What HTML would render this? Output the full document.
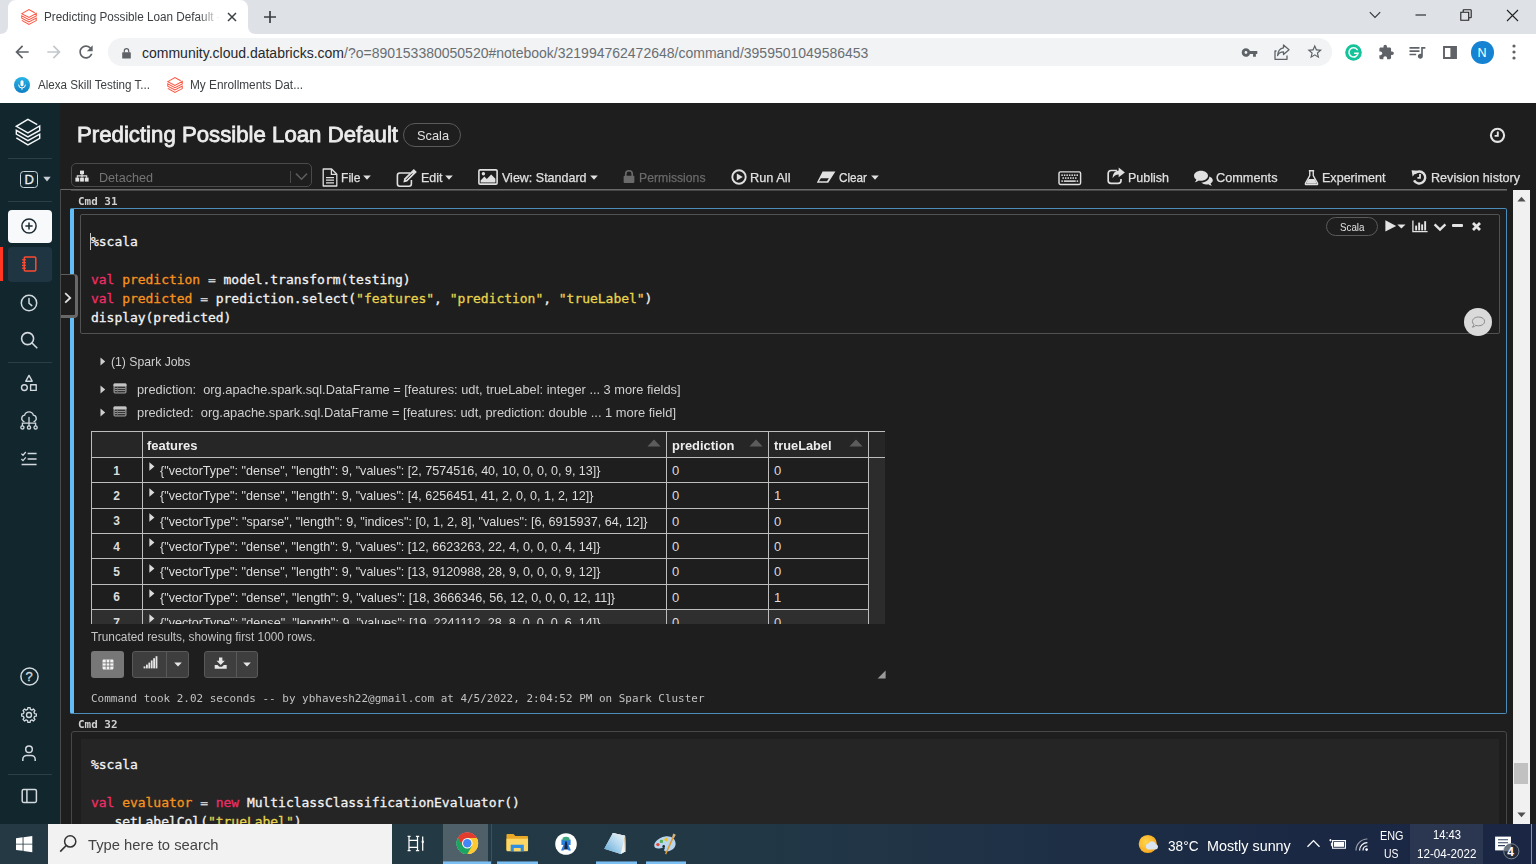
<!DOCTYPE html>
<html lang="en"><head><meta charset="utf-8"><title>Predicting Possible Loan Default - Databricks</title>
<style>
html,body{margin:0;padding:0;}
body{width:1536px;height:864px;overflow:hidden;position:relative;background:#1e1e1e;font-family:"Liberation Sans",sans-serif;}
body div,body svg,body span.t{position:absolute;}
svg{overflow:visible;}
span.t{white-space:pre;transform-origin:0 0;line-height:normal;}
</style></head><body>
<div style="left:60px;top:103px;width:1476px;height:721px;background:#1e1e1e;"></div>
<span class="t" style="left:76.8px;top:122.30px;font:400 22.3px 'Liberation Sans', sans-serif;color:#ececec;transform:scaleX(0.9961);-webkit-text-stroke:0.8px #ececec;">Predicting Possible Loan Default</span>
<div style="left:403px;top:122.5px;width:57.5px;height:24px;border:1px solid #5a5a5a;border-radius:12px;box-sizing:border-box;"></div>
<span class="t" style="left:416.5px;top:128.00px;font:400 13px 'Liberation Sans', sans-serif;color:#e0e0e0;transform:scaleX(0.9837);">Scala</span>
<svg style="left:1488px;top:126px;" width="19" height="19" viewBox="0 0 19 19"><g fill="none" stroke="#e4e4e4" stroke-width="2.1"><circle cx="9.5" cy="9.3" r="6.6"/><path d="M9.8 5.4 V9.9 H6.6" stroke-width="1.9"/></g></svg>
<div style="left:70.5px;top:163px;width:241.5px;height:24px;border:1px solid #4a4a4a;border-radius:5px;box-sizing:border-box;"></div>
<svg style="left:75px;top:169.5px;" width="14" height="13" viewBox="0 0 14 13"><g fill="#e2e2e2"><rect x="5" y="0.6" width="4" height="3.6"/><rect x="0.4" y="7.6" width="3.8" height="4"/><rect x="5.1" y="7.6" width="3.8" height="4"/><rect x="9.8" y="7.6" width="3.8" height="4"/></g><path d="M7 4 V7.6 M2.3 7.8 V5.9 H11.7 V7.8" stroke="#e2e2e2" stroke-width="1.1" fill="none"/></svg>
<span class="t" style="left:98.5px;top:170.20px;font:400 13.5px 'Liberation Sans', sans-serif;color:#757575;transform:scaleX(0.9343);">Detached</span>
<div style="left:290px;top:170.5px;width:1px;height:12px;background:#4a4a4a;"></div>
<svg style="left:295px;top:172px;" width="13" height="9" viewBox="0 0 13 9"><path d="M1 1.6 L6.5 7.2 L12 1.6" fill="none" stroke="#5c5c5c" stroke-width="1.5"/></svg>
<svg style="left:321px;top:168px;" width="18" height="19" viewBox="0 0 18 19"><g fill="none" stroke="#e0e0e0" stroke-width="1.3" stroke-linejoin="round"><path d="M2.2 1 H10.6 L15.8 6.2 V18 H2.2 Z"/><path d="M10.4 1.2 V6.4 H15.6"/><path d="M5 9.6 H13 M5 12.2 H13 M5 14.8 H13" stroke-width="1.2"/></g></svg>
<span class="t" style="left:340.5px;top:170.00px;font:400 13.5px 'Liberation Sans', sans-serif;color:#e0e0e0;transform:scaleX(0.8959);-webkit-text-stroke:0.25px;">File</span>
<svg style="left:363.4px;top:175px;" width="8" height="5" viewBox="0 0 8 5"><path d="M0.2 0.4 H7.8 L4 4.8 Z" fill="#e0e0e0"/></svg>
<svg style="left:396px;top:167.5px;" width="22" height="20" viewBox="0 0 22 20"><g fill="none" stroke="#e0e0e0" stroke-width="1.6" stroke-linejoin="round"><path d="M14.2 5 H3.8 Q1.4 5 1.4 7.4 V15.8 Q1.4 18.2 3.8 18.2 H13 Q15.4 18.2 15.4 15.8 V12"/></g><path d="M17.8 1 L20.8 4 L11.2 13.6 L7.4 14.4 L8.2 10.6 Z" fill="#e0e0e0"/><path d="M9.9 11.9 L16.4 5.4" stroke="#1e1e1e" stroke-width="1"/></svg>
<span class="t" style="left:420.5px;top:170.00px;font:400 13.5px 'Liberation Sans', sans-serif;color:#e0e0e0;transform:scaleX(0.9241);-webkit-text-stroke:0.25px;">Edit</span>
<svg style="left:445px;top:175px;" width="8" height="5" viewBox="0 0 8 5"><path d="M0.2 0.4 H7.8 L4 4.8 Z" fill="#e0e0e0"/></svg>
<svg style="left:478px;top:169px;" width="20" height="16" viewBox="0 0 20 16"><rect x="0.9" y="0.9" width="18.2" height="14.2" rx="1.2" fill="none" stroke="#e0e0e0" stroke-width="1.6"/><path d="M2.6 13.4 V11.4 L6.4 7.6 L8.8 10 L13.2 5.6 L17.4 9.8 V13.4 Z" fill="#e0e0e0"/><circle cx="5.4" cy="4.8" r="1.7" fill="#e0e0e0"/></svg>
<span class="t" style="left:502px;top:170.00px;font:400 13.5px 'Liberation Sans', sans-serif;color:#e0e0e0;transform:scaleX(0.9254);-webkit-text-stroke:0.25px;">View: Standard</span>
<svg style="left:590px;top:175px;" width="8" height="5" viewBox="0 0 8 5"><path d="M0.2 0.4 H7.8 L4 4.8 Z" fill="#e0e0e0"/></svg>
<svg style="left:623px;top:169.8px;" width="12" height="13.4" viewBox="0 0 12 14"><rect x="0.4" y="6" width="11.2" height="7.6" rx="1" fill="#6a6a6a"/><path d="M2.6 6.2 V4.2 A3.4 3.4 0 0 1 9.4 4.2 V6.2" fill="none" stroke="#6a6a6a" stroke-width="1.7"/></svg>
<span class="t" style="left:638.5px;top:170.00px;font:400 13.5px 'Liberation Sans', sans-serif;color:#6a6a6a;transform:scaleX(0.9044);-webkit-text-stroke:0.25px;">Permissions</span>
<svg style="left:730.5px;top:169px;" width="16" height="16" viewBox="0 0 16 16"><circle cx="8" cy="8" r="6.7" fill="none" stroke="#e0e0e0" stroke-width="1.9"/><path d="M5.8 4.4 L11.8 8 L5.8 11.6 Z" fill="#e0e0e0"/></svg>
<span class="t" style="left:750px;top:170.00px;font:400 13.5px 'Liberation Sans', sans-serif;color:#e0e0e0;transform:scaleX(0.9467);-webkit-text-stroke:0.25px;">Run All</span>
<svg style="left:815.8px;top:170.6px;" width="20" height="13" viewBox="0 0 20 13"><path d="M6.6 0.6 H19.4 L12.2 11.8 H0.8 Z M4.9 7.2 L3 10.2 H11 L12.9 7.2 Z" fill="#e0e0e0" fill-rule="evenodd"/></svg>
<span class="t" style="left:839px;top:170.00px;font:400 13.5px 'Liberation Sans', sans-serif;color:#e0e0e0;transform:scaleX(0.8678);-webkit-text-stroke:0.25px;">Clear</span>
<svg style="left:871px;top:175px;" width="8" height="5" viewBox="0 0 8 5"><path d="M0.2 0.4 H7.8 L4 4.8 Z" fill="#e0e0e0"/></svg>
<svg style="left:1058px;top:170.6px;" width="23.6" height="14.4" viewBox="0 0 26 16"><rect x="1" y="1" width="24" height="14" rx="1.6" fill="none" stroke="#e0e0e0" stroke-width="1.6"/><g fill="#e0e0e0"><rect x="3.6" y="3.8" width="1.7" height="1.7"/><rect x="6.4" y="3.8" width="1.7" height="1.7"/><rect x="9.2" y="3.8" width="1.7" height="1.7"/><rect x="12.0" y="3.8" width="1.7" height="1.7"/><rect x="14.8" y="3.8" width="1.7" height="1.7"/><rect x="17.6" y="3.8" width="1.7" height="1.7"/><rect x="20.4" y="3.8" width="1.7" height="1.7"/><rect x="4.8" y="7" width="1.7" height="1.7"/><rect x="7.6" y="7" width="1.7" height="1.7"/><rect x="10.4" y="7" width="1.7" height="1.7"/><rect x="13.2" y="7" width="1.7" height="1.7"/><rect x="16.0" y="7" width="1.7" height="1.7"/><rect x="18.8" y="7" width="1.7" height="1.7"/><rect x="3.6" y="10.4" width="1.7" height="1.7"/><rect x="6.4" y="10.4" width="13.2" height="1.7"/><rect x="20.6" y="10.4" width="1.7" height="1.7"/></g></svg>
<svg style="left:1106.5px;top:166.8px;" width="18.5" height="17.5" viewBox="0 0 19 18"><path d="M10.2 3.6 H4.2 Q1.2 3.6 1.2 6.6 V13.8 Q1.2 16.8 4.2 16.8 H11.4 Q14.4 16.8 14.4 13.8 V12.4" fill="none" stroke="#e0e0e0" stroke-width="1.7"/><path d="M12 0.6 L18.4 5.6 L12 10.6 V7.6 C9 7.6 7 8.8 5.8 11.6 C5.8 7 8 4 12 3.6 Z" fill="#e0e0e0"/></svg>
<span class="t" style="left:1127.5px;top:169.80px;font:400 13.5px 'Liberation Sans', sans-serif;color:#e0e0e0;transform:scaleX(0.9259);-webkit-text-stroke:0.25px;">Publish</span>
<svg style="left:1194px;top:169.6px;" width="19" height="16" viewBox="0 0 19 16"><path d="M7 0.8 C10.9 0.8 14 3 14 5.8 C14 8.6 10.9 10.8 7 10.8 C6.2 10.8 5.5 10.7 4.8 10.6 C3.8 11.5 2.4 12 0.8 12.2 C1.6 11.4 2.1 10.6 2.3 9.6 C0.9 8.7 0 7.3 0 5.8 C0 3 3.1 0.8 7 0.8 Z" fill="#e0e0e0"/><path d="M15.4 6.4 C17.4 7.2 18.8 8.6 18.8 10.2 C18.8 11.5 17.9 12.6 16.6 13.4 C16.8 14.2 17.3 15 18.1 15.6 C16.6 15.5 15.2 15 14.3 14.2 C13.7 14.3 13 14.4 12.4 14.4 C10.3 14.4 8.5 13.7 7.3 12.5 C11.6 12.4 15.2 10 15.4 6.4 Z" fill="#e0e0e0"/></svg>
<span class="t" style="left:1216px;top:169.80px;font:400 13.5px 'Liberation Sans', sans-serif;color:#e0e0e0;transform:scaleX(0.9423);-webkit-text-stroke:0.25px;">Comments</span>
<svg style="left:1304px;top:169.8px;" width="15" height="15.6" viewBox="0 0 15 17"><path d="M4.6 0.8 H10.4 M5.6 1 V6.2 L0.9 14.6 Q0.4 16 2 16 H13 Q14.6 16 14.1 14.6 L9.4 6.2 V1" fill="none" stroke="#e0e0e0" stroke-width="1.5"/><path d="M4.2 9.8 H10.8 L13.4 15 H1.6 Z" fill="#e0e0e0"/></svg>
<span class="t" style="left:1322px;top:169.80px;font:400 13.5px 'Liberation Sans', sans-serif;color:#e0e0e0;transform:scaleX(0.9300);-webkit-text-stroke:0.25px;">Experiment</span>
<svg style="left:1410.5px;top:169px;" width="17" height="16" viewBox="0 0 17 16"><path d="M3.6 4.6 A6 6 0 1 1 3 11.4" fill="none" stroke="#e0e0e0" stroke-width="2.4"/><path d="M0.6 1.2 L6.6 1.8 L1.6 7.4 Z" fill="#e0e0e0"/><path d="M9 5 V8.9 H6.4" fill="none" stroke="#e0e0e0" stroke-width="1.8"/></svg>
<span class="t" style="left:1431px;top:169.80px;font:400 13.5px 'Liberation Sans', sans-serif;color:#e0e0e0;transform:scaleX(0.9339);-webkit-text-stroke:0.25px;">Revision history</span>
<div style="left:60px;top:189px;width:1px;height:635px;background:#4a4a4a;"></div>
<div style="left:61px;top:189px;width:1446px;height:1px;background:#696969;"></div>
<div style="left:71px;top:190px;width:1436px;height:1px;background:#474747;"></div>
<div style="left:1513px;top:189.5px;width:17px;height:634.5px;background:#f1f1f1;"></div>
<svg style="left:1517px;top:196px;" width="9" height="6" viewBox="0 0 9 6"><path d="M0.4 5.4 L4.5 0.8 L8.6 5.4 Z" fill="#505050"/></svg>
<svg style="left:1517px;top:812px;" width="9" height="6" viewBox="0 0 9 6"><path d="M0.4 0.6 L4.5 5.2 L8.6 0.6 Z" fill="#505050"/></svg>
<div style="left:1514px;top:763px;width:14px;height:21px;background:#c1c1c1;"></div>
<div style="left:70px;top:208px;width:1437px;height:506px;border:1px solid #4a8dbb;border-left:4px solid #62bdf7;border-radius:2px;box-sizing:border-box;"></div>
<span class="t" style="left:78px;top:194.60px;font:700 11px 'DejaVu Sans Mono', 'Liberation Mono', monospace;color:#d0d0d0;transform:scaleX(0.9937);">Cmd 31</span>
<div style="left:80px;top:214px;width:1420px;height:120px;border:1px solid #515151;border-radius:2px;box-sizing:border-box;"></div>
<div style="left:90.3px;top:233px;width:1px;height:16.5px;background:#c8c8c8;"></div>
<span class="t" style="left:91px;top:234.30px;font:400 13px 'DejaVu Sans Mono', 'Liberation Mono', monospace;color:#f2f2f2;letter-spacing:-0.03px;-webkit-text-stroke:0.3px;">%scala</span>
<span class="t" style="left:91px;top:272.30px;font:400 13px 'DejaVu Sans Mono', 'Liberation Mono', monospace;color:#f2f2f2;letter-spacing:-0.03px;-webkit-text-stroke:0.3px;"><span style="color:#ee2d66">val</span> <span style="color:#f7931e">prediction</span> <span style="color:#cfcfcf">=</span> model.transform(testing)</span>
<span class="t" style="left:91px;top:291.30px;font:400 13px 'DejaVu Sans Mono', 'Liberation Mono', monospace;color:#f2f2f2;letter-spacing:-0.03px;-webkit-text-stroke:0.3px;"><span style="color:#ee2d66">val</span> <span style="color:#f7931e">predicted</span> <span style="color:#cfcfcf">=</span> prediction.select(<span style="color:#e8d44d">"features"</span>, <span style="color:#e8d44d">"prediction"</span>, <span style="color:#e8d44d">"trueLabel"</span>)</span>
<span class="t" style="left:91px;top:310.30px;font:400 13px 'DejaVu Sans Mono', 'Liberation Mono', monospace;color:#f2f2f2;letter-spacing:-0.03px;-webkit-text-stroke:0.3px;">display(predicted)</span>
<div style="left:61px;top:274px;width:17px;height:44px;background:#1e1e1e;border-top:1px solid #5e5e5e;border-right:3px solid #686868;border-bottom:3px solid #686868;border-radius:0 4px 4px 0;box-sizing:border-box;"></div>
<svg style="left:64px;top:291.5px;" width="8" height="12" viewBox="0 0 8 12"><path d="M1.2 1.2 L6.2 5.9 L1.2 10.6" fill="none" stroke="#e2e2e2" stroke-width="1.8"/></svg>
<div style="left:1326px;top:217px;width:51.5px;height:19px;border:1px solid #5a5a5a;border-radius:10px;box-sizing:border-box;"></div>
<span class="t" style="left:1339.5px;top:221.00px;font:400 11.5px 'Liberation Sans', sans-serif;color:#e0e0e0;transform:scaleX(0.8512);">Scala</span>
<svg style="left:1385px;top:220px;" width="12" height="12" viewBox="0 0 12 12"><path d="M0.4 0.2 L11.2 5.9 L0.4 11.6 Z" fill="#e4e4e4"/></svg>
<svg style="left:1397px;top:224px;" width="9" height="5" viewBox="0 0 9 5"><path d="M0.3 0.5 H8.5 L4.4 4.6 Z" fill="#e4e4e4"/></svg>
<svg style="left:1412px;top:219.5px;" width="16" height="13" viewBox="0 0 16 13"><path d="M0.9 0.4 V11.6 H15.6" fill="none" stroke="#e4e4e4" stroke-width="1.3"/><g fill="#e4e4e4"><rect x="3.2" y="5.6" width="1.9" height="4.8"/><rect x="6.2" y="2.6" width="1.9" height="7.8"/><rect x="9.2" y="4.4" width="1.9" height="6"/><rect x="12.2" y="1.2" width="1.9" height="9.2"/></g></svg>
<svg style="left:1432.5px;top:222px;" width="14" height="10" viewBox="0 0 14 10"><path d="M1.6 2.4 L7 7.6 L12.4 2.4" fill="none" stroke="#e4e4e4" stroke-width="2.4"/></svg>
<div style="left:1452px;top:224.2px;width:11.4px;height:3.2px;background:#e4e4e4;border-radius:1px;"></div>
<svg style="left:1471px;top:221px;" width="11" height="11" viewBox="0 0 11 11"><path d="M2 2 L9 9 M9 2 L2 9" stroke="#e4e4e4" stroke-width="2.8" fill="none"/></svg>
<div style="left:1464px;top:307.8px;width:28px;height:28px;background:#dadada;border-radius:50%;"></div>
<svg style="left:1470.5px;top:315.5px;" width="15" height="13" viewBox="0 0 15 13"><path d="M7.6 1 C11 1 13.6 2.9 13.6 5.4 C13.6 7.9 11 9.8 7.6 9.8 C6.6 9.8 5.7 9.6 4.9 9.4 C4 10.4 2.8 10.9 1.4 11.2 C2.2 10.3 2.7 9.4 2.8 8.4 C1.9 7.6 1.4 6.5 1.4 5.4 C1.4 2.9 4.2 1 7.6 1 Z" fill="none" stroke="#8a8a8a" stroke-width="1"/></svg>
<svg style="left:99.5px;top:356.5px;" width="6" height="9" viewBox="0 0 6 9"><path d="M0.5 0.4 L5.2 4.5 L0.5 8.6 Z" fill="#cfcfcf"/></svg>
<span class="t" style="left:111px;top:354.30px;font:400 13px 'Liberation Sans', sans-serif;color:#cfcfcf;transform:scaleX(0.9403);">(1) Spark Jobs</span>
<svg style="left:100px;top:385px;" width="6" height="9" viewBox="0 0 6 9"><path d="M0.5 0.4 L5.2 4.5 L0.5 8.6 Z" fill="#cfcfcf"/></svg>
<svg style="left:113px;top:382.9px;" width="14" height="11" viewBox="0 0 14 11"><rect x="0.5" y="0.5" width="13" height="10" rx="1.4" fill="#9a9a9a"/><rect x="0.5" y="0.5" width="13" height="3" rx="1.2" fill="#c4c4c4"/><rect x="1.7" y="3.6" width="10.6" height="5.8" fill="#333"/><path d="M1.7 5.5 H12.3 M1.7 7.5 H12.3" stroke="#9a9a9a" stroke-width="0.9"/><path d="M4.4 3.6 V9.4" stroke="#777" stroke-width="0.8"/></svg>
<span class="t" style="left:136.5px;top:382.10px;font:400 13px 'Liberation Sans', sans-serif;color:#cfcfcf;transform:scaleX(0.9851);white-space:pre;">prediction:  org.apache.spark.sql.DataFrame = [features: udt, trueLabel: integer ... 3 more fields]</span>
<svg style="left:100px;top:407.5px;" width="6" height="9" viewBox="0 0 6 9"><path d="M0.5 0.4 L5.2 4.5 L0.5 8.6 Z" fill="#cfcfcf"/></svg>
<svg style="left:113px;top:406.09999999999997px;" width="14" height="11" viewBox="0 0 14 11"><rect x="0.5" y="0.5" width="13" height="10" rx="1.4" fill="#9a9a9a"/><rect x="0.5" y="0.5" width="13" height="3" rx="1.2" fill="#c4c4c4"/><rect x="1.7" y="3.6" width="10.6" height="5.8" fill="#333"/><path d="M1.7 5.5 H12.3 M1.7 7.5 H12.3" stroke="#9a9a9a" stroke-width="0.9"/><path d="M4.4 3.6 V9.4" stroke="#777" stroke-width="0.8"/></svg>
<span class="t" style="left:136.5px;top:404.60px;font:400 13px 'Liberation Sans', sans-serif;color:#cfcfcf;transform:scaleX(0.9912);white-space:pre;">predicted:  org.apache.spark.sql.DataFrame = [features: udt, prediction: double ... 1 more field]</span>
<div style="left:91.5px;top:431px;width:793px;height:26px;background:#262626;"></div>
<div style="left:869px;top:458px;width:15.5px;height:166px;background:#2c2c2c;"></div>
<div style="left:91.5px;top:609.16px;width:777px;height:14.840000000000003px;background:#2f2f2f;"></div>
<div style="left:91px;top:431px;width:793.5px;height:1px;background:#bdbdbd;"></div>
<div style="left:91px;top:457px;width:793.5px;height:1px;background:#bdbdbd;"></div>
<div style="left:91px;top:482.36px;width:778px;height:1px;background:#bdbdbd;"></div>
<div style="left:91px;top:507.72px;width:778px;height:1px;background:#bdbdbd;"></div>
<div style="left:91px;top:533.08px;width:778px;height:1px;background:#bdbdbd;"></div>
<div style="left:91px;top:558.44px;width:778px;height:1px;background:#bdbdbd;"></div>
<div style="left:91px;top:583.8px;width:778px;height:1px;background:#bdbdbd;"></div>
<div style="left:91px;top:609.16px;width:778px;height:1px;background:#bdbdbd;"></div>
<div style="left:91px;top:431px;width:1px;height:193px;background:#bdbdbd;"></div>
<div style="left:141.5px;top:431px;width:1px;height:193px;background:#bdbdbd;"></div>
<div style="left:665.5px;top:431px;width:1px;height:193px;background:#bdbdbd;"></div>
<div style="left:768px;top:431px;width:1px;height:193px;background:#bdbdbd;"></div>
<div style="left:868px;top:431px;width:1px;height:193px;background:#bdbdbd;"></div>
<span class="t" style="left:147px;top:437.60px;font:700 13px 'Liberation Sans', sans-serif;color:#ededed;transform:scaleX(0.9985);">features</span>
<span class="t" style="left:671.5px;top:437.60px;font:700 13px 'Liberation Sans', sans-serif;color:#ededed;transform:scaleX(0.9945);">prediction</span>
<span class="t" style="left:773.5px;top:437.60px;font:700 13px 'Liberation Sans', sans-serif;color:#ededed;transform:scaleX(0.9826);">trueLabel</span>
<svg style="left:646.5px;top:439px;" width="14" height="8" viewBox="0 0 14 8"><path d="M0.4 7.6 L7 0.6 L13.6 7.6 Z" fill="#5c5c5c"/></svg>
<svg style="left:748.5px;top:439px;" width="14" height="8" viewBox="0 0 14 8"><path d="M0.4 7.6 L7 0.6 L13.6 7.6 Z" fill="#5c5c5c"/></svg>
<svg style="left:848.5px;top:439px;" width="14" height="8" viewBox="0 0 14 8"><path d="M0.4 7.6 L7 0.6 L13.6 7.6 Z" fill="#5c5c5c"/></svg>
<div style="left:91.5px;top:431px;width:793px;height:193px;overflow:hidden;"><div style="left:-91.5px;top:-431px;">
<span class="t" style="left:113.2px;top:463.50px;font:700 12px 'Liberation Sans', sans-serif;color:#dcdcdc;">1</span>
<svg style="left:148.5px;top:462.29999999999995px;" width="6" height="9" viewBox="0 0 6 9"><path d="M0.4 0.3 L5.4 4.5 L0.4 8.7 Z" fill="#dcdcdc"/></svg>
<span class="t" style="left:160px;top:462.90px;font:400 13px 'Liberation Sans', sans-serif;color:#dcdcdc;transform:scaleX(0.9658);">{"vectorType": "dense", "length": 9, "values": [2, 7574516, 40, 10, 0, 0, 0, 9, 13]}</span>
<span class="t" style="left:672px;top:462.90px;font:400 13px 'Liberation Sans', sans-serif;color:#dcdcdc;">0</span>
<span class="t" style="left:774px;top:462.90px;font:400 13px 'Liberation Sans', sans-serif;color:#dcdcdc;">0</span>
<span class="t" style="left:113.2px;top:488.86px;font:700 12px 'Liberation Sans', sans-serif;color:#dcdcdc;">2</span>
<svg style="left:148.5px;top:487.65999999999997px;" width="6" height="9" viewBox="0 0 6 9"><path d="M0.4 0.3 L5.4 4.5 L0.4 8.7 Z" fill="#dcdcdc"/></svg>
<span class="t" style="left:160px;top:488.26px;font:400 13px 'Liberation Sans', sans-serif;color:#dcdcdc;transform:scaleX(0.9657);">{"vectorType": "dense", "length": 9, "values": [4, 6256451, 41, 2, 0, 0, 1, 2, 12]}</span>
<span class="t" style="left:672px;top:488.26px;font:400 13px 'Liberation Sans', sans-serif;color:#dcdcdc;">0</span>
<span class="t" style="left:774px;top:488.26px;font:400 13px 'Liberation Sans', sans-serif;color:#dcdcdc;">1</span>
<span class="t" style="left:113.2px;top:514.22px;font:700 12px 'Liberation Sans', sans-serif;color:#dcdcdc;">3</span>
<svg style="left:148.5px;top:513.02px;" width="6" height="9" viewBox="0 0 6 9"><path d="M0.4 0.3 L5.4 4.5 L0.4 8.7 Z" fill="#dcdcdc"/></svg>
<span class="t" style="left:160px;top:513.62px;font:400 13px 'Liberation Sans', sans-serif;color:#dcdcdc;transform:scaleX(0.9708);">{"vectorType": "sparse", "length": 9, "indices": [0, 1, 2, 8], "values": [6, 6915937, 64, 12]}</span>
<span class="t" style="left:672px;top:513.62px;font:400 13px 'Liberation Sans', sans-serif;color:#dcdcdc;">0</span>
<span class="t" style="left:774px;top:513.62px;font:400 13px 'Liberation Sans', sans-serif;color:#dcdcdc;">0</span>
<span class="t" style="left:113.2px;top:539.58px;font:700 12px 'Liberation Sans', sans-serif;color:#dcdcdc;">4</span>
<svg style="left:148.5px;top:538.38px;" width="6" height="9" viewBox="0 0 6 9"><path d="M0.4 0.3 L5.4 4.5 L0.4 8.7 Z" fill="#dcdcdc"/></svg>
<span class="t" style="left:160px;top:538.98px;font:400 13px 'Liberation Sans', sans-serif;color:#dcdcdc;transform:scaleX(0.9658);">{"vectorType": "dense", "length": 9, "values": [12, 6623263, 22, 4, 0, 0, 0, 4, 14]}</span>
<span class="t" style="left:672px;top:538.98px;font:400 13px 'Liberation Sans', sans-serif;color:#dcdcdc;">0</span>
<span class="t" style="left:774px;top:538.98px;font:400 13px 'Liberation Sans', sans-serif;color:#dcdcdc;">0</span>
<span class="t" style="left:113.2px;top:564.94px;font:700 12px 'Liberation Sans', sans-serif;color:#dcdcdc;">5</span>
<svg style="left:148.5px;top:563.7399999999999px;" width="6" height="9" viewBox="0 0 6 9"><path d="M0.4 0.3 L5.4 4.5 L0.4 8.7 Z" fill="#dcdcdc"/></svg>
<span class="t" style="left:160px;top:564.34px;font:400 13px 'Liberation Sans', sans-serif;color:#dcdcdc;transform:scaleX(0.9658);">{"vectorType": "dense", "length": 9, "values": [13, 9120988, 28, 9, 0, 0, 0, 9, 12]}</span>
<span class="t" style="left:672px;top:564.34px;font:400 13px 'Liberation Sans', sans-serif;color:#dcdcdc;">0</span>
<span class="t" style="left:774px;top:564.34px;font:400 13px 'Liberation Sans', sans-serif;color:#dcdcdc;">0</span>
<span class="t" style="left:113.2px;top:590.30px;font:700 12px 'Liberation Sans', sans-serif;color:#dcdcdc;">6</span>
<svg style="left:148.5px;top:589.0999999999999px;" width="6" height="9" viewBox="0 0 6 9"><path d="M0.4 0.3 L5.4 4.5 L0.4 8.7 Z" fill="#dcdcdc"/></svg>
<span class="t" style="left:160px;top:589.70px;font:400 13px 'Liberation Sans', sans-serif;color:#dcdcdc;transform:scaleX(0.9689);">{"vectorType": "dense", "length": 9, "values": [18, 3666346, 56, 12, 0, 0, 0, 12, 11]}</span>
<span class="t" style="left:672px;top:589.70px;font:400 13px 'Liberation Sans', sans-serif;color:#dcdcdc;">0</span>
<span class="t" style="left:774px;top:589.70px;font:400 13px 'Liberation Sans', sans-serif;color:#dcdcdc;">1</span>
<span class="t" style="left:113.2px;top:615.66px;font:700 12px 'Liberation Sans', sans-serif;color:#dcdcdc;">7</span>
<svg style="left:148.5px;top:614.4599999999999px;" width="6" height="9" viewBox="0 0 6 9"><path d="M0.4 0.3 L5.4 4.5 L0.4 8.7 Z" fill="#dcdcdc"/></svg>
<span class="t" style="left:160px;top:615.06px;font:400 13px 'Liberation Sans', sans-serif;color:#dcdcdc;transform:scaleX(0.9699);">{"vectorType": "dense", "length": 9, "values": [19, 2241112, 28, 8, 0, 0, 0, 6, 14]}</span>
<span class="t" style="left:672px;top:615.06px;font:400 13px 'Liberation Sans', sans-serif;color:#dcdcdc;">0</span>
<span class="t" style="left:774px;top:615.06px;font:400 13px 'Liberation Sans', sans-serif;color:#dcdcdc;">0</span>
</div></div>
<span class="t" style="left:91px;top:630.00px;font:400 12px 'Liberation Sans', sans-serif;color:#c4c4c4;transform:scaleX(0.9861);">Truncated results, showing first 1000 rows.</span>
<div style="left:91px;top:651px;width:33px;height:26.5px;background:#777;border-radius:3px;"></div>
<svg style="left:101.5px;top:658.5px;" width="12" height="11" viewBox="0 0 12 11"><rect x="0.6" y="0.6" width="10.8" height="9.8" rx="0.8" fill="#f4f4f4"/><path d="M0.6 3.9 H11.4 M0.6 7.1 H11.4 M4.2 0.6 V10.4 M7.8 0.6 V10.4" stroke="#777" stroke-width="0.9"/></svg>
<div style="left:132px;top:651px;width:57px;height:26.5px;background:#3e3e3e;border:1px solid #595959;border-radius:3px;box-sizing:border-box;"></div>
<div style="left:166px;top:651.5px;width:1px;height:25.5px;background:#595959;"></div>
<svg style="left:143px;top:656px;" width="15" height="13" viewBox="0 0 15 13"><g fill="#e6e6e6"><rect x="0.6" y="10.4" width="1.8" height="2"/><rect x="3" y="8.6" width="1.8" height="3.8"/><rect x="5.4" y="6.6" width="1.8" height="5.8"/><rect x="7.8" y="4.4" width="1.8" height="8"/><rect x="10.2" y="2.2" width="1.8" height="10.2"/><rect x="12.6" y="0.2" width="1.8" height="12.2"/></g></svg>
<svg style="left:173.5px;top:662px;" width="8" height="5" viewBox="0 0 8 5"><path d="M0.2 0.4 H7.8 L4 4.6 Z" fill="#e6e6e6"/></svg>
<div style="left:204px;top:651px;width:54px;height:26.5px;background:#3e3e3e;border:1px solid #595959;border-radius:3px;box-sizing:border-box;"></div>
<div style="left:235.5px;top:651.5px;width:1px;height:25.5px;background:#595959;"></div>
<svg style="left:213.5px;top:657.4px;" width="13.4" height="12.2" viewBox="0 0 14 13"><g fill="#e6e6e6"><path d="M5.2 0.4 H8.8 V4 H11.4 L7 8.4 L2.6 4 H5.2 Z"/><path d="M0.6 8.6 H3.6 L5.6 10.4 H8.4 L10.4 8.6 H13.4 V12.4 H0.6 Z"/></g></svg>
<svg style="left:242.5px;top:662px;" width="8" height="5" viewBox="0 0 8 5"><path d="M0.2 0.4 H7.8 L4 4.6 Z" fill="#e6e6e6"/></svg>
<svg style="left:877px;top:670px;" width="9" height="9" viewBox="0 0 9 9"><path d="M8.6 0.6 V8.6 H0.6 Z" fill="#9a9a9a"/></svg>
<span class="t" style="left:91px;top:691.60px;font:400 11px 'DejaVu Sans Mono', 'Liberation Mono', monospace;color:#c2c2c2;transform:scaleX(0.9961);">Command took 2.02 seconds -- by ybhavesh22@gmail.com at 4/5/2022, 2:04:52 PM on Spark Cluster</span>
<span class="t" style="left:78px;top:718.20px;font:700 11px 'DejaVu Sans Mono', 'Liberation Mono', monospace;color:#d0d0d0;transform:scaleX(0.9937);">Cmd 32</span>
<div style="left:70.5px;top:731px;width:1436.5px;height:100px;border:1px solid #474747;border-radius:3px;box-sizing:border-box;"></div>
<div style="left:81px;top:739px;width:1418px;height:90px;background:#252525;"></div>
<span class="t" style="left:91px;top:757.30px;font:400 13px 'DejaVu Sans Mono', 'Liberation Mono', monospace;color:#f2f2f2;letter-spacing:-0.03px;-webkit-text-stroke:0.3px;">%scala</span>
<span class="t" style="left:91px;top:795.30px;font:400 13px 'DejaVu Sans Mono', 'Liberation Mono', monospace;color:#f2f2f2;letter-spacing:-0.03px;-webkit-text-stroke:0.3px;"><span style="color:#ee2d66">val</span> <span style="color:#f7931e">evaluator</span> <span style="color:#cfcfcf">=</span> <span style="color:#ee2d66">new</span> MulticlassClassificationEvaluator()</span>
<span class="t" style="left:91px;top:814.30px;font:400 13px 'DejaVu Sans Mono', 'Liberation Mono', monospace;color:#f2f2f2;letter-spacing:-0.03px;-webkit-text-stroke:0.3px;">  .setLabelCol(<span style="color:#e8d44d">"trueLabel"</span>)</span>
<div style="left:0px;top:103px;width:60px;height:721px;background:#12262e;"></div>
<svg style="left:8px;top:112px;" width="40" height="40" viewBox="0 0 40 40"><path d="M29.2 12.7 L19.9 7.4 L8.33 14.35 L19.9 20.8 L31.7 13.9 V18.5 L19.9 24.8 L8.33 18.3 V22.2 L19.9 28.7 L31.7 22.2 V26.4 L19.9 32.9 L8.33 25.9" fill="none" stroke="#f4f6f7" stroke-width="1.45" stroke-linejoin="miter"/></svg>
<div style="left:8px;top:158px;width:44px;height:1px;background:#2b3f49;"></div>
<div style="left:20.2px;top:170.8px;width:17.8px;height:16.8px;border:1.5px solid #ccd4d9;border-radius:3.5px;box-sizing:border-box;"></div>
<span class="t" style="left:24.4px;top:172.20px;font:400 13px 'Liberation Sans', sans-serif;color:#eef2f4;-webkit-text-stroke:0.3px;">D</span>
<svg style="left:43px;top:176px;" width="8" height="6" viewBox="0 0 8 6"><path d="M0.3 0.8 H7.7 L4 5.4 Z" fill="#c5ced3"/></svg>
<div style="left:8px;top:200.5px;width:44px;height:1px;background:#2b3f49;"></div>
<div style="left:8px;top:209.5px;width:44px;height:33.5px;background:#f7f9fa;border-radius:4px;"></div>
<svg style="left:20px;top:217px;" width="18" height="18" viewBox="0 0 18 18"><circle cx="9" cy="9" r="7.1" fill="none" stroke="#1b2b33" stroke-width="1.5"/><path d="M9 5.4 V12.6 M5.4 9 H12.6" stroke="#1b2b33" stroke-width="1.5"/></svg>
<div style="left:8px;top:247px;width:44px;height:34.5px;background:#1f3642;border-radius:4px;"></div>
<div style="left:0px;top:247px;width:3px;height:33.5px;background:#ff3621;"></div>
<svg style="left:20px;top:255px;" width="18" height="18" viewBox="0 0 18 18"><g fill="none" stroke="#ff4a31" stroke-width="1.5"><rect x="4.2" y="2" width="11.6" height="14" rx="1.2"/><path d="M2 4.8 H6 M2 7.6 H6 M2 10.4 H6 M2 13.2 H6" stroke-width="1.2"/></g></svg>
<svg style="left:19px;top:293px;" width="20" height="20" viewBox="0 0 20 20"><g fill="none" stroke="#d3dade" stroke-width="1.5" stroke-linecap="round"><circle cx="10" cy="10" r="7.7"/><path d="M10 5.4 V10.2 L12.8 12.6"/></g></svg>
<svg style="left:19px;top:330px;" width="20" height="20" viewBox="0 0 20 20"><g fill="none" stroke="#d3dade" stroke-width="1.6" stroke-linecap="round"><circle cx="8.6" cy="8.6" r="6"/><path d="M13 13 L17.8 17.8"/></g></svg>
<div style="left:8px;top:361.5px;width:44px;height:1px;background:#2b3f49;"></div>
<svg style="left:19px;top:373px;" width="20" height="20" viewBox="0 0 20 20"><g fill="none" stroke="#d3dade" stroke-width="1.4" stroke-linejoin="round"><path d="M10 2.4 L13.2 8.2 H6.8 Z"/><circle cx="5.4" cy="14.6" r="2.9"/><rect x="11.6" y="11.8" width="5.6" height="5.6"/></g></svg>
<svg style="left:19px;top:411px;" width="20" height="20" viewBox="0 0 20 20"><g fill="none" stroke="#d3dade" stroke-width="1.3" stroke-linecap="round"><path d="M5 10.6 A3.3 3.3 0 0 1 5.6 4.2 A4.6 4.6 0 0 1 14.4 4.2 A3.3 3.3 0 0 1 15 10.6"/><path d="M10 6.4 V14.6 M3.4 14.6 V12.2 H16.6 V14.6"/><circle cx="3.4" cy="16.4" r="1.6"/><circle cx="10" cy="16.4" r="1.6"/><circle cx="16.6" cy="16.4" r="1.6"/></g></svg>
<svg style="left:19px;top:449px;" width="20" height="20" viewBox="0 0 20 20"><g fill="none" stroke="#d3dade" stroke-width="1.5"><path d="M8.6 4.6 H17.6 M8.6 10 H17.6 M2.6 15.4 H17.6"/><path d="M2.4 4.6 L4 6.2 L6.8 3 M2.4 10 L4 11.6 L6.8 8.4" stroke-width="1.3"/></g></svg>
<svg style="left:18.5px;top:666px;" width="21" height="21" viewBox="0 0 21 21"><circle cx="10.5" cy="10.5" r="8.6" fill="none" stroke="#d3dade" stroke-width="1.5"/></svg>
<span class="t" style="left:25.4px;top:669.40px;font:400 13px 'Liberation Sans', sans-serif;color:#d3dade;-webkit-text-stroke:0.3px #d3dade;">?</span>
<svg style="left:19px;top:705px;" width="20" height="20" viewBox="0 0 20 20"><path d="M8.59 4.48 L8.89 2.68 L11.11 2.68 L11.41 4.48 L12.91 5.10 L14.39 4.04 L15.96 5.61 L14.90 7.09 L15.52 8.59 L17.32 8.89 L17.32 11.11 L15.52 11.41 L14.90 12.91 L15.96 14.39 L14.39 15.96 L12.91 14.90 L11.41 15.52 L11.11 17.32 L8.89 17.32 L8.59 15.52 L7.09 14.90 L5.61 15.96 L4.04 14.39 L5.10 12.91 L4.48 11.41 L2.68 11.11 L2.68 8.89 L4.48 8.59 L5.10 7.09 L4.04 5.61 L5.61 4.04 L7.09 5.10 Z" fill="none" stroke="#d3dade" stroke-width="1.35" stroke-linejoin="round"/><circle cx="10" cy="10" r="2.5" fill="none" stroke="#d3dade" stroke-width="1.35"/></svg>
<svg style="left:19px;top:743px;" width="20" height="20" viewBox="0 0 20 20"><g fill="none" stroke="#d3dade" stroke-width="1.5"><circle cx="10" cy="6.2" r="3.3"/><path d="M3.8 18 V16.4 A4 4 0 0 1 7.8 12.4 H12.2 A4 4 0 0 1 16.2 16.4 V18"/></g></svg>
<div style="left:8px;top:773.5px;width:44px;height:1px;background:#2b3f49;"></div>
<svg style="left:19px;top:786px;" width="20" height="20" viewBox="0 0 20 20"><g fill="none" stroke="#d3dade" stroke-width="1.5"><rect x="3.2" y="3.6" width="14.2" height="12.8" rx="1.4"/><path d="M7.9 3.6 V16.4"/></g></svg>
<div style="left:0px;top:0px;width:1536px;height:34px;background:#dee1e6;"></div>
<svg style="left:0px;top:0px;" width="260" height="34" viewBox="0 0 260 34"><path d="M0 34 C5 34 8 31 8 26 V8 C8 3.5 11.5 0 16 0 H240 C244.5 0 248 3.5 248 8 V26 C248 31 251 34 256 34 Z" fill="#fff"/></svg>
<svg style="left:20.5px;top:8.8px;" width="16" height="16" viewBox="0 0 16 16"><g transform="translate(-4.40 -3.59) scale(0.62 0.575)"><path d="M29.2 12.7 L19.9 7.4 L8.33 14.35 L19.9 20.8 L31.7 13.9 V18.5 L19.9 24.8 L8.33 18.3 V22.2 L19.9 28.7 L31.7 22.2 V26.4 L19.9 32.9 L8.33 25.9" fill="none" stroke="#ff5540" stroke-width="1.67"/></g></svg>
<span class="t" style="left:44px;top:10.00px;font:400 12px 'Liberation Sans', sans-serif;color:#3c4043;transform:scaleX(0.9773);width:190px;overflow:hidden;-webkit-mask-image:linear-gradient(90deg,#000 158px,transparent 180px);">Predicting Possible Loan Default - Databricks Community Edition</span>
<svg style="left:226px;top:11px;" width="12" height="12" viewBox="0 0 12 12"><path d="M2 2 L10 10 M10 2 L2 10" stroke="#3c4043" stroke-width="1.5" fill="none"/></svg>
<svg style="left:263px;top:10px;" width="14" height="14" viewBox="0 0 14 14"><path d="M7 1 V13 M1 7 H13" stroke="#3c4043" stroke-width="1.7" fill="none"/></svg>
<svg style="left:1369px;top:10px;" width="12" height="10" viewBox="0 0 12 10"><path d="M0.8 2.2 L6 7.4 L11.2 2.2" stroke="#333" stroke-width="1.1" fill="none"/></svg>
<svg style="left:1415px;top:10px;" width="12" height="10" viewBox="0 0 12 10"><path d="M0.5 5 H11" stroke="#222" stroke-width="1.1" fill="none"/></svg>
<svg style="left:1460px;top:9px;" width="12" height="12" viewBox="0 0 12 12"><path d="M0.8 3.3 H8.7 V11.2 H0.8 Z M3.2 3.3 V1.2 C3.2 0.9 3.4 0.8 3.6 0.8 H10.6 C11 0.8 11.2 1 11.2 1.4 V8.3 C11.2 8.6 11 8.8 10.7 8.8 H8.7" stroke="#222" stroke-width="1.1" fill="none"/></svg>
<svg style="left:1506px;top:9px;" width="13" height="13" viewBox="0 0 13 13"><path d="M1 1 L12 12 M12 1 L1 12" stroke="#222" stroke-width="1.1" fill="none"/></svg>
<div style="left:0px;top:34px;width:1536px;height:69px;background:#fff;"></div>
<svg style="left:12px;top:42px;" width="20" height="20" viewBox="0 0 24 24"><path fill="#5f6368" d="M20 11H7.83l5.59-5.59L12 4l-8 8 8 8 1.41-1.41L7.83 13H20v-2z"/></svg>
<svg style="left:44px;top:42px;" width="20" height="20" viewBox="0 0 24 24"><path fill="#c4c7cb" d="M12 4l-1.41 1.41L16.17 11H4v2h12.17l-5.58 5.59L12 20l8-8z"/></svg>
<svg style="left:76px;top:42px;" width="20" height="20" viewBox="0 0 24 24"><path fill="#5f6368" d="M17.65 6.35C16.2 4.9 14.21 4 12 4c-4.42 0-7.99 3.58-7.99 8s3.57 8 7.99 8c3.73 0 6.84-2.55 7.73-6h-2.08c-.82 2.33-3.04 4-5.65 4-3.31 0-6-2.69-6-6s2.69-6 6-6c1.66 0 3.14.69 4.22 1.78L13 11h7V4l-2.35 2.35z"/></svg>
<div style="left:108px;top:38px;width:1224px;height:28px;background:#f1f3f4;border-radius:14px;"></div>
<svg style="left:121.5px;top:48px;" width="9" height="11" viewBox="0 0 9 11"><path d="M0.8 4.2 H8.2 Q8.8 4.2 8.8 4.8 V10 Q8.8 10.6 8.2 10.6 H0.8 Q0.2 10.6 0.2 10 V4.8 Q0.2 4.2 0.8 4.2 Z" fill="#5f6368"/><path d="M2.3 4.4 V2.9 A2.2 2.2 0 0 1 6.7 2.9 V4.4" fill="none" stroke="#5f6368" stroke-width="1.2"/></svg>
<span class="t" style="left:142px;top:44.90px;font:400 14px 'Liberation Sans', sans-serif;color:#696e73;"><span style="color:#26282c">community.cloud.databricks.com</span>/?o=890153380050520#notebook/321994762472648/command/3959501049586453</span>
<svg style="left:1241px;top:44px;" width="17" height="17" viewBox="0 0 24 24"><path fill="#5f6368" d="M12.65 10C11.83 7.67 9.61 6 7 6c-3.31 0-6 2.69-6 6s2.69 6 6 6c2.61 0 4.83-1.67 5.65-4H17v4h4v-4h2v-4H12.65zM7 14c-1.1 0-2-.9-2-2s.9-2 2-2 2 .9 2 2-.9 2-2 2z"/></svg>
<svg style="left:1273px;top:43px;" width="18" height="18" viewBox="0 0 18 18"><g fill="none" stroke="#5f6368" stroke-width="1.3" stroke-linejoin="round"><path d="M3.5 8 H2 V16.3 H14 V12.5"/><path d="M10.5 2 L16 6.8 L10.5 11.6 V8.9 C7.5 8.9 5.8 10 4.6 12.6 C4.9 8.6 6.8 5.2 10.5 4.8 Z"/></g></svg>
<svg style="left:1305.5px;top:43.3px;" width="17.5" height="17.5" viewBox="0 0 24 24"><path fill="#5f6368" d="M22 9.24l-7.19-.62L12 2 9.19 8.63 2 9.24l5.46 4.73L5.82 21 12 17.27 18.18 21l-1.63-7.03L22 9.24zM12 15.4l-3.76 2.27 1-4.28-3.32-2.88 4.38-.38L12 6.1l1.71 4.04 4.38.38-3.32 2.88 1 4.28L12 15.4z"/></svg>
<svg style="left:1345px;top:44px;" width="17" height="17" viewBox="0 0 17 17"><circle cx="8.5" cy="8.5" r="8.3" fill="#15c39a"/><path d="M12.2 5.6 A4.6 4.6 0 1 0 13.1 9.2 H9.6" fill="none" stroke="#fff" stroke-width="1.5" stroke-linecap="round"/></svg>
<svg style="left:1377.5px;top:44px;" width="16.5" height="16.5" viewBox="0 0 24 24"><path fill="#5f6368" d="M20.5 11H19V7c0-1.1-.9-2-2-2h-4V3.5C13 2.12 11.88 1 10.5 1S8 2.12 8 3.5V5H4c-1.1 0-1.99.9-1.99 2v3.8H3.5c1.49 0 2.7 1.21 2.7 2.7s-1.21 2.7-2.7 2.7H2V20c0 1.1.9 2 2 2h3.8v-1.5c0-1.49 1.21-2.7 2.7-2.7 1.49 0 2.7 1.21 2.7 2.7V22H17c1.1 0 2-.9 2-2v-4h1.5c1.38 0 2.5-1.12 2.5-2.5S21.88 11 20.5 11z"/></svg>
<svg style="left:1407px;top:42px;" width="20" height="20" viewBox="0 0 24 24"><path fill="#5f6368" d="M15 6H3v2h12V6zm0 4H3v2h12v-2zM3 16h8v-2H3v2zM17 6v8.18c-.31-.11-.65-.18-1-.18-1.66 0-3 1.34-3 3s1.34 3 3 3 3-1.34 3-3V8h3V6h-5z"/></svg>
<svg style="left:1443px;top:45.5px;" width="14" height="13" viewBox="0 0 14 13"><path d="M1 1 H13 V12 H1 Z" fill="none" stroke="#5f6368" stroke-width="1.9"/><path d="M7.4 1 H13 V12 H7.4 Z" fill="#5f6368"/></svg>
<div style="left:1471px;top:41px;width:22.6px;height:22.6px;background:#1583d2;border-radius:50%;"></div>
<span class="t" style="left:1477.6px;top:45.50px;font:400 12.5px 'Liberation Sans', sans-serif;color:#fff;">N</span>
<svg style="left:1512px;top:43px;" width="4" height="18" viewBox="0 0 4 18"><circle cx="2" cy="3" r="1.6" fill="#5f6368"/><circle cx="2" cy="9" r="1.6" fill="#5f6368"/><circle cx="2" cy="15" r="1.6" fill="#5f6368"/></svg>
<svg style="left:14px;top:77px;" width="16" height="16" viewBox="0 0 16 16"><defs><linearGradient id="alx" x1="0" y1="0" x2="0" y2="1"><stop offset="0" stop-color="#2ab3e6"/><stop offset="1" stop-color="#0f7fc4"/></linearGradient></defs><circle cx="8" cy="8" r="8" fill="url(#alx)"/><rect x="6.5" y="3.2" width="3" height="6" rx="1.5" fill="#fff"/><path d="M4.6 7.6 A3.4 3.4 0 0 0 11.4 7.6 M8 11 V12.8" stroke="#fff" stroke-width="1" fill="none"/></svg>
<span class="t" style="left:38px;top:78.00px;font:400 12px 'Liberation Sans', sans-serif;color:#3c4043;transform:scaleX(0.9686);">Alexa Skill Testing T...</span>
<svg style="left:166.5px;top:77px;" width="16" height="16" viewBox="0 0 16 16"><g transform="translate(-4.40 -3.59) scale(0.62 0.575)"><path d="M29.2 12.7 L19.9 7.4 L8.33 14.35 L19.9 20.8 L31.7 13.9 V18.5 L19.9 24.8 L8.33 18.3 V22.2 L19.9 28.7 L31.7 22.2 V26.4 L19.9 32.9 L8.33 25.9" fill="none" stroke="#ff5540" stroke-width="1.67"/></g></svg>
<span class="t" style="left:190px;top:78.00px;font:400 12px 'Liberation Sans', sans-serif;color:#3c4043;transform:scaleX(0.9852);">My Enrollments Dat...</span>
<div style="left:0px;top:824px;width:1536px;height:40px;background:linear-gradient(90deg,#243944 0px,#233944 400px,#223845 700px,#203446 900px,#1d2e45 1100px,#1b2844 1300px,#1a2643 1536px);"></div>
<svg style="left:16px;top:836px;" width="16.3" height="16.3" viewBox="0 0 17 17"><path fill="#fff" d="M0 2.4 L6.9 1.4 V8 H0 Z M7.8 1.3 L17 0 V8 H7.8 Z M0 8.9 H6.9 V15.5 L0 14.6 Z M7.8 8.9 H17 V17 L7.8 15.7 Z"/></svg>
<div style="left:48px;top:824px;width:344px;height:40px;background:#f2f2f2;"></div>
<svg style="left:59px;top:834px;" width="19" height="19" viewBox="0 0 19 19"><circle cx="11.2" cy="7.4" r="5.6" fill="none" stroke="#333" stroke-width="1.5"/><path d="M7.2 11.5 L1.2 17.6" stroke="#333" stroke-width="1.6" fill="none"/></svg>
<span class="t" style="left:88px;top:835.50px;font:400 15px 'Liberation Sans', sans-serif;color:#444;transform:scaleX(0.9843);">Type here to search</span>
<svg style="left:406px;top:834px;" width="20" height="20" viewBox="0 0 20 20"><g fill="none" stroke="#fff" stroke-width="1.25"><path d="M3 2.4 V16.7 M11.5 2.4 V16.7 M3 6.3 H11.5 M3 13.4 H11.5 M1.6 2.4 H4.6 M9.9 2.4 H13.2 M1.6 16.7 H4.6 M9.9 16.7 H13.2 M16.7 2.4 V16.7"/></g><rect x="15.7" y="6.7" width="2.1" height="2.2" fill="#fff"/></svg>
<div style="left:443px;top:824px;width:45px;height:40px;background:rgba(255,255,255,0.2);"></div>
<div style="left:491px;top:824px;width:1px;height:40px;background:rgba(255,255,255,0.12);"></div>
<div style="left:443px;top:862px;width:48px;height:2px;background:#7cc0f3;"></div>
<div style="left:443px;top:861px;width:48px;height:1px;background:rgba(124,192,243,0.55);"></div>
<svg style="left:455.8px;top:832.2px;" width="22.6" height="22.6" viewBox="0 0 24 24"><circle cx="12" cy="12" r="11.5" fill="#fff"/><path d="M12 12 L2.04 6.25 A11.5 11.5 0 0 1 21.96 6.25 Z" fill="#e33b2e"/><path d="M12 12 L21.96 6.25 A11.5 11.5 0 0 1 12 23.5 Z" fill="#fcc934"/><path d="M12 12 L12 23.5 A11.5 11.5 0 0 1 2.04 6.25 Z" fill="#1da462"/><path d="M12 6.3 H21.9 A11.5 11.5 0 0 0 2.04 6.25 L7 14.8 Z" fill="#e33b2e"/><path d="M16.95 14.85 L12 23.5 A11.5 11.5 0 0 0 21.93 6.3 H12 Z" fill="#fcc934"/><path d="M7.05 14.85 L2.04 6.25 A11.5 11.5 0 0 0 12 23.5 L16.95 14.85 Z" fill="#1da462"/><circle cx="12" cy="12" r="5.6" fill="#fff"/><circle cx="12" cy="12" r="4.5" fill="#4285f4"/></svg>
<div style="left:497px;top:862px;width:40.5px;height:2px;background:#7cc0f3;"></div>
<div style="left:497px;top:861px;width:40.5px;height:1px;background:rgba(124,192,243,0.55);"></div>
<svg style="left:505.5px;top:833.4px;" width="22.5" height="19.7" viewBox="0 0 24 21"><path d="M0.5 2 Q0.5 1 1.5 1 H8 L10 3.2 H22.5 Q23.5 3.2 23.5 4.2 V18 H0.5 Z" fill="#e9a825"/><path d="M0.5 6 H23.5 V18.5 Q23.5 19.5 22.5 19.5 H1.5 Q0.5 19.5 0.5 18.5 Z" fill="#fdd765"/><path d="M5 12.5 H19 V19.5 H5 Z" fill="#2f8ee0"/><path d="M8.3 16 H15.7 V19.5 H8.3 Z" fill="#fdd765"/></svg>
<svg style="left:555.2px;top:832.6px;" width="22" height="22" viewBox="0 0 22 22"><circle cx="11" cy="11" r="10.8" fill="#fff"/><path d="M6.4 6.6 H15.6 V12 H13.6 L16 17.6 H13.4 L11 11.6 L8.6 17.6 H6 L8.4 12 H6.4 Z" fill="#2b7de0"/><path d="M7.6 4.8 Q11 2.6 14.4 4.8 V7.4 H7.6 Z" fill="#3ea67c"/><path d="M10.2 8.4 H11.8 L13 16.6 H9 Z" fill="#15294a"/></svg>
<div style="left:596px;top:862px;width:40.5px;height:2px;background:#7cc0f3;"></div>
<div style="left:596px;top:861px;width:40.5px;height:1px;background:rgba(124,192,243,0.55);"></div>
<svg style="left:603px;top:832px;" width="24" height="23" viewBox="0 0 24 23"><defs><linearGradient id="npg" x1="0" y1="1" x2="1" y2="0"><stop offset="0" stop-color="#5aa5d6"/><stop offset="0.55" stop-color="#b5d8ee"/><stop offset="1" stop-color="#f2f7fb"/></linearGradient></defs><path d="M9.9 1 L22.1 3.8 L22.8 19.2 L17.8 22.1 L1.3 16.7 Z" fill="#e8eef3"/><path d="M9.9 1 L22.1 3.8 L17.8 22.1 L1.3 16.7 Z" fill="url(#npg)"/><path d="M22.1 3.8 L22.8 19.2 L17.8 22.1 Z" fill="#f1f1ee"/><path d="M22.1 3.8 L22.9 19.2 L22 19.7 L21.6 6 Z" fill="#c08a3c"/><path d="M9.9 1 L22.1 3.8 L21.8 5 L9.4 2.2 Z" fill="#dfe6ec"/></svg>
<div style="left:645.5px;top:862px;width:40.5px;height:2px;background:#7cc0f3;"></div>
<div style="left:645.5px;top:861px;width:40.5px;height:1px;background:rgba(124,192,243,0.55);"></div>
<svg style="left:653px;top:831px;" width="25" height="25" viewBox="0 0 25 25"><path d="M12 5.6 C17.6 4.4 23 8 22.6 13.2 C22.2 17.8 17.4 20.6 12.6 20.4 C11 20.4 10.8 18.8 11.6 17.8 C12.2 16.8 11.2 16 10 16.4 C7.4 17.4 2.6 18.6 1.4 15.6 C0.2 11.6 5.4 6.8 12 5.6 Z" fill="#b9d6ee"/><circle cx="4.9" cy="13.6" r="1.7" fill="#e5463a"/><rect x="6.9" y="8.9" width="3" height="3" fill="#55b05a"/><circle cx="13.2" cy="8.6" r="1.8" fill="#f4c21f"/><circle cx="10.7" cy="15.4" r="1.3" fill="#1c2b36"/><path d="M19.2 6.6 L20.6 7.2 L13.2 23.4 L12 22.8 Z" fill="#e39a2b"/><path d="M20.2 2.6 L22.8 3.8 L20.8 7.4 L19 6.6 Z" fill="#d8b27a"/></svg>
<svg style="left:1137px;top:833px;" width="24" height="23" viewBox="0 0 24 23"><defs><radialGradient id="sun" cx="0.4" cy="0.4" r="0.7"><stop offset="0" stop-color="#ffd54a"/><stop offset="1" stop-color="#f7a21b"/></radialGradient></defs><circle cx="10.8" cy="11" r="9.1" fill="url(#sun)"/><path d="M10.8 16.6 A3.1 3.1 0 0 1 11.4 10.6 A4 4 0 0 1 18.8 11 A2.9 2.9 0 0 1 19 16.6 Z" fill="#d9e6f2"/></svg>
<span class="t" style="left:1168px;top:836.80px;font:400 15px 'Liberation Sans', sans-serif;color:#fff;transform:scaleX(0.9100);">38°C</span>
<span class="t" style="left:1206.5px;top:836.80px;font:400 15px 'Liberation Sans', sans-serif;color:#fff;transform:scaleX(0.9572);">Mostly sunny</span>
<svg style="left:1306px;top:838px;" width="15" height="11" viewBox="0 0 15 11"><path d="M1.5 8.8 L7.5 2.6 L13.5 8.8" fill="none" stroke="#fff" stroke-width="1.3"/></svg>
<svg style="left:1329px;top:838px;" width="18" height="12" viewBox="0 0 18 12"><path d="M3.6 2.6 H16.4 V10.2 H3.6 Z" fill="none" stroke="#fff" stroke-width="1.1"/><rect x="5" y="4" width="10" height="4.8" fill="#fff"/><path d="M3.6 5 H2.4 V7.8 H3.6 M1.4 1 V3.4 M0.4 2.2 H2.6" stroke="#fff" stroke-width="1" fill="none"/></svg>
<svg style="left:1354px;top:837px;" width="16" height="15" viewBox="0 0 16 15"><g fill="none" stroke="#fff" stroke-width="1.2"><path d="M2 13.4 A11.4 11.4 0 0 1 13.4 2" opacity="0.55"/><path d="M5.6 13.4 A7.8 7.8 0 0 1 13.4 5.6"/><path d="M9 13.4 A4.4 4.4 0 0 1 13.4 9"/></g><circle cx="12.6" cy="12.6" r="1.3" fill="#fff"/></svg>
<span class="t" style="left:1380px;top:828.70px;font:400 12px 'Liberation Sans', sans-serif;color:#fff;transform:scaleX(0.9033);">ENG</span>
<span class="t" style="left:1384px;top:846.70px;font:400 12px 'Liberation Sans', sans-serif;color:#fff;transform:scaleX(0.8697);">US</span>
<div style="left:1410px;top:824px;width:73px;height:40px;background:rgba(255,255,255,0.075);"></div>
<span class="t" style="left:1432.5px;top:828.10px;font:400 12px 'Liberation Sans', sans-serif;color:#fff;transform:scaleX(0.9324);">14:43</span>
<span class="t" style="left:1417px;top:846.50px;font:400 12px 'Liberation Sans', sans-serif;color:#fff;transform:scaleX(0.9692);">12-04-2022</span>
<svg style="left:1494px;top:835.6px;" width="18" height="16" viewBox="0 0 18 16"><path d="M1.1 0.6 H17 V14.4 H1.1 Z" fill="#fff"/><path d="M4 3.8 H14 M4 6.7 H14 M4 9.6 H11" stroke="#32425e" stroke-width="1.1"/></svg>
<svg style="left:1502.5px;top:843px;" width="17" height="17" viewBox="0 0 17 17"><circle cx="8.3" cy="8.3" r="7.6" fill="#222a3a" stroke="#7f919c" stroke-width="0.9"/><path d="M8.3 8.3 L1.2 8.3 A7.1 7.1 0 0 1 8.3 1.2 Z" fill="#8a8f96" opacity="0.75"/></svg>
<span class="t" style="left:1507.3px;top:845.40px;font:700 12px 'Liberation Sans', sans-serif;color:#fff;">4</span>
<div style="left:1531px;top:824px;width:1px;height:40px;background:#8794a6;"></div>
</body></html>
